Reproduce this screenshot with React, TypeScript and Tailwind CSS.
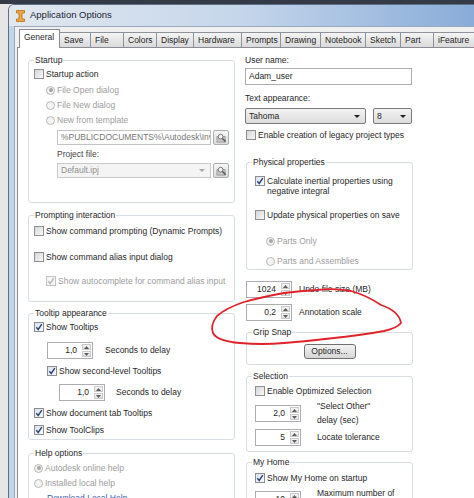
import type { ReactNode } from "react";

const dim = "text-[#9d9d9d]";

function Check({ checked = false, disabled = false }: { checked?: boolean; disabled?: boolean }) {
  const box = disabled
    ? "border-[#c4c4c4] bg-[#f5f5f5]"
    : checked
    ? "border-[#8b8d90] bg-linear-to-br from-[#d9e2ef] to-[#f9fbfd]"
    : "border-[#8e9093] bg-linear-to-br from-[#d6d6d6] to-[#f8f8f8]";
  return (
    <span className={"w-[10px] h-[10px] shrink-0 border flex items-center justify-center " + box}>
      {checked && (
        <svg viewBox="0 0 8 8" className="w-[8px] h-[8px]">
          <path
            d="M1.3 4.3 L3.2 6.5 L6.8 1.2"
            fill="none"
            stroke={disabled ? "#b9b9b9" : "#2f4477"}
            strokeWidth="1.4"
          />
        </svg>
      )}
    </span>
  );
}

function Radio({ selected = false }: { selected?: boolean }) {
  return (
    <span className="w-[9px] h-[9px] shrink-0 rounded-full border border-[#b8b8b8] bg-[#f3f3f3] flex items-center justify-center">
      {selected && <span className="w-[4px] h-[4px] rounded-full bg-[#a6a6a6]" />}
    </span>
  );
}

function Row({ className = "", children }: { className?: string; children: ReactNode }) {
  return <div className={"h-[12px] flex items-center gap-[2px] leading-[12px] whitespace-nowrap " + className}>{children}</div>;
}

function Group({ label, className = "", children }: { label: string; className?: string; children: ReactNode }) {
  return (
    <div className={"border border-[#d7dde2] rounded-[3px] " + className}>
      <div className="-mt-[6px] ml-[5px] px-[1px] w-fit h-[11px] leading-[11px] bg-white">{label}</div>
      {children}
    </div>
  );
}

function Arrow({ up = false }: { up?: boolean }) {
  return (
    <svg viewBox="0 0 5 3" className="w-[5px] h-[3px]">
      <path d={up ? "M0 3 L2.5 0 L5 3 Z" : "M0 0 L2.5 3 L5 0 Z"} fill="#5a5a5a" />
    </svg>
  );
}

function Spin({ value }: { value: string }) {
  return (
    <div className="w-[46px] h-[17px] shrink-0 border border-[#abadb3] bg-white flex">
      <div className="flex-1 flex items-center justify-end pr-[4px]">{value}</div>
      <div className="w-[11px] flex flex-col gap-px p-px">
        <div className="flex-1 border border-[#c9c9c9] bg-linear-to-b from-[#f5f5f5] to-[#e2e2e2] flex items-center justify-center">
          <Arrow up />
        </div>
        <div className="flex-1 border border-[#c9c9c9] bg-linear-to-b from-[#f5f5f5] to-[#e2e2e2] flex items-center justify-center">
          <Arrow />
        </div>
      </div>
    </div>
  );
}

function Browse() {
  return (
    <div className="w-[16px] h-[15px] shrink-0 border border-[#adadad] rounded-[2px] bg-linear-to-b from-[#f7f7f7] to-[#dcdcdc] flex items-center justify-center">
      <svg viewBox="0 0 12 11" className="w-[11px] h-[10px]">
        <rect x="1" y="4" width="9" height="6" fill="#c9c9c9" stroke="#8a8a8a" strokeWidth="0.8" />
        <circle cx="5" cy="4" r="2.6" fill="#eef2f6" stroke="#6d6d6d" strokeWidth="1" />
        <path d="M7 6 L10.5 9.5" stroke="#5c5c5c" strokeWidth="1.6" />
      </svg>
    </div>
  );
}

function Combo({ text, size, disabled = false }: { text: string; size: string; disabled?: boolean }) {
  const box = disabled
    ? "border-[#c9c9c9] bg-[#f4f4f4] text-[#8f8f8f]"
    : "border-[#7a7a7a] rounded-[2px] bg-linear-to-b from-[#f3f3f3] to-[#dcdcdc]";
  return (
    <div className={"border flex items-center pl-[3px] pr-[5px] " + size + " " + box}>
      <span className="flex-1">{text}</span>
      <svg viewBox="0 0 6 3" className="w-[6px] h-[3px]">
        <path d="M0 0 L3 3 L6 0 Z" fill={disabled ? "#a8a8a8" : "#1f1f1f"} />
      </svg>
    </div>
  );
}

const tabs: [string, string][] = [
  ["Save", "w-[31px]"],
  ["File", "w-[33px]"],
  ["Colors", "w-[33px]"],
  ["Display", "w-[37px]"],
  ["Hardware", "w-[48px]"],
  ["Prompts", "w-[39px]"],
  ["Drawing", "w-[40px]"],
  ["Notebook", "w-[45px]"],
  ["Sketch", "w-[35px]"],
  ["Part", "w-[33px]"],
  ["iFeature", "w-[50px]"],
];

export default function App() {
  return (
    <div className="w-[474px] h-[498px] overflow-hidden relative bg-[#e6e6e6] flex flex-col font-['Liberation_Sans',Arial,sans-serif] text-[8.5px] text-[#1f1f1f]">
      <div className="h-[4px] shrink-0 bg-[#343b47]" />

      <div className="flex-1 min-h-0 ml-[8px] flex flex-col rounded-tl-[6px] border-l border-t border-[#5f6f86] overflow-hidden">
        {/* title bar */}
        <div className="h-[21px] shrink-0 flex items-center bg-linear-to-r from-[#e2e8ef] via-[#c5d6ea] to-[#89acd8]">
          <svg viewBox="0 0 9 12" className="ml-[7px] w-[9px] h-[12px]">
            <path
              d="M0.5 0.5 H8.5 V3 H6 V9 H8.5 V11.5 H0.5 V9 H3 V3 H0.5 Z"
              fill="#f2a93b"
              stroke="#b86d16"
              strokeWidth="0.8"
            />
          </svg>
          <span className="ml-[5px] -mt-[1px] text-[9.5px] text-[#1b2433]">Application Options</span>
        </div>

        <div className="flex-1 min-h-0 flex">
          <div className="w-[5px] shrink-0 bg-[#c2d5ea]" />
          <div className="flex-1 min-w-0 flex flex-col border-l border-t border-[#98a8bd] bg-[#f0f0f0]">
            {/* tabs */}
            <div className="flex items-end pl-[4px] pt-[2px] whitespace-nowrap">
              <div className="relative z-10 -mb-px w-[41px] h-[19px] shrink-0 border-l border-t border-r border-[#898c95] bg-white pl-[4px] pt-[2px] leading-[10px]">
                General
              </div>
              {tabs.map(([t, w]) => (
                <div
                  key={t}
                  className={"h-[15px] shrink-0 border-t border-r border-[#8d929b] bg-linear-to-b from-[#f4f4f4] to-[#dadada] pl-[4px] flex items-center " + w}
                >
                  {t}
                </div>
              ))}
            </div>

            {/* panel */}
            <div className="flex-1 min-h-0 ml-[2px] border-l border-t border-[#898c95] bg-white flex items-start">
              {/* left column */}
              <div className="w-[207px] shrink-0 ml-[10px] pt-[12px] flex flex-col">
                <Group label="Startup" className="pb-[24px]">
                  <Row className="mt-[2px] pl-[5px]">
                    <Check />
                    <span>Startup action</span>
                  </Row>
                  <Row className={"mt-[4px] pl-[17px] " + dim}>
                    <Radio selected />
                    <span>File Open dialog</span>
                  </Row>
                  <Row className={"mt-[3px] pl-[17px] " + dim}>
                    <Radio />
                    <span>File New dialog</span>
                  </Row>
                  <Row className={"mt-[3px] pl-[17px] " + dim}>
                    <Radio />
                    <span>New from template</span>
                  </Row>
                  <div className="mt-[4px] ml-[28px] flex gap-[2px]">
                    <div className="w-[154px] h-[15px] border border-[#c4c4c4] bg-white pl-[3px] flex items-center overflow-hidden whitespace-nowrap text-[#777]">
                      %PUBLICDOCUMENTS%\Autodesk\Inventor 2012\Templates
                    </div>
                    <Browse />
                  </div>
                  <Row className="mt-[3px] pl-[28px] text-[#444]">
                    <span>Project file:</span>
                  </Row>
                  <div className="mt-[3px] ml-[28px] flex gap-[2px]">
                    <Combo text="Default.ipj" size="w-[154px] h-[15px]" disabled />
                    <Browse />
                  </div>
                </Group>

                <Group label="Prompting interaction" className="mt-[12px] pb-[14px]">
                  <Row className="mt-[4px] pl-[5px]">
                    <Check />
                    <span>Show command prompting (Dynamic Prompts)</span>
                  </Row>
                  <Row className="mt-[14px] pl-[5px]">
                    <Check />
                    <span>Show command alias input dialog</span>
                  </Row>
                  <Row className={"mt-[12px] pl-[17px] " + dim}>
                    <Check checked disabled />
                    <span>Show autocomplete for command alias input</span>
                  </Row>
                </Group>

                <Group label="Tooltip appearance" className="mt-[11px] pb-[3px]">
                  <Row className="mt-[2px] pl-[5px]">
                    <Check checked />
                    <span>Show Tooltips</span>
                  </Row>
                  <div className="mt-[9px] ml-[18px] flex items-center">
                    <Spin value="1,0" />
                    <span className="ml-[12px]">Seconds to delay</span>
                  </div>
                  <Row className="mt-[6px] pl-[18px]">
                    <Check checked />
                    <span>Show second-level Tooltips</span>
                  </Row>
                  <div className="mt-[7px] ml-[30px] flex items-center">
                    <Spin value="1,0" />
                    <span className="ml-[11px]">Seconds to delay</span>
                  </div>
                  <Row className="mt-[6px] pl-[5px]">
                    <Check checked />
                    <span>Show document tab Tooltips</span>
                  </Row>
                  <Row className="mt-[5px] pl-[5px]">
                    <Check checked />
                    <span>Show ToolClips</span>
                  </Row>
                </Group>

                <Group label="Help options" className="mt-[13px] pb-[20px]">
                  <Row className={"mt-[3px] pl-[5px] " + dim}>
                    <Radio selected />
                    <span>Autodesk online help</span>
                  </Row>
                  <Row className={"mt-[3px] pl-[5px] " + dim}>
                    <Radio />
                    <span>Installed local help</span>
                  </Row>
                  <Row className="mt-[3px] pl-[18px] text-[#3a5fae] underline">
                    <span>Download Local Help</span>
                  </Row>
                </Group>
              </div>

              {/* right column */}
              <div className="w-[168px] shrink-0 ml-[10px] flex flex-col">
                <Row className="mt-[6px]">
                  <span>User name:</span>
                </Row>
                <div className="mt-[2px] w-[167px] h-[17px] border border-[#abadb3] bg-white px-[3px] flex items-center">
                  Adam_user
                </div>
                <Row className="mt-[7px]">
                  <span>Text appearance:</span>
                </Row>
                <div className="mt-[4px] flex gap-[7px]">
                  <Combo text="Tahoma" size="w-[121px] h-[16px]" />
                  <Combo text="8" size="w-[39px] h-[16px]" />
                </div>
                <Row className="mt-[5px] pl-[1px]">
                  <Check />
                  <span>Enable creation of legacy project types</span>
                </Row>

                <Group label="Physical properties" className="mt-[21px] ml-[1px] w-[167px] pb-[2px]">
                  <div className="mt-[8px] pl-[8px] flex items-start gap-[2px]">
                    <Check checked />
                    <div className="leading-[10px]">
                      Calculate inertial properties using
                      <br />
                      negative integral
                    </div>
                  </div>
                  <Row className="mt-[13px] pl-[8px]">
                    <Check />
                    <span>Update physical properties on save</span>
                  </Row>
                  <Row className={"mt-[14px] pl-[19px] " + dim}>
                    <Radio selected />
                    <span>Parts Only</span>
                  </Row>
                  <Row className={"mt-[8px] pl-[19px] " + dim}>
                    <Radio />
                    <span>Parts and Assemblies</span>
                  </Row>
                </Group>

                <div className="mt-[11px] ml-[1px] flex items-center">
                  <Spin value="1024" />
                  <span className="ml-[7px]">Undo file size (MB)</span>
                </div>
                <div className="mt-[6px] ml-[1px] flex items-center">
                  <Spin value="0,2" />
                  <span className="ml-[7px]">Annotation scale</span>
                </div>

                <Group label="Grip Snap" className="mt-[11px] ml-[1px] w-[167px] pb-[5px]">
                  <div className="mt-[6px] flex justify-center">
                    <button className="w-[52px] h-[15px] border border-[#707070] rounded-[3px] bg-linear-to-b from-[#f3f3f3] to-[#d6d6d6] flex items-center justify-center">
                      Options...
                    </button>
                  </div>
                </Group>

                <Group label="Selection" className="mt-[11px] ml-[1px] w-[167px] pb-[5px]">
                  <Row className="mt-[3px] pl-[8px]">
                    <Check />
                    <span>Enable Optimized Selection</span>
                  </Row>
                  <div className="mt-[8px] pl-[8px] flex items-start">
                    <Spin value="2,0" />
                    <div className="ml-[16px] -mt-[6px] leading-[14px]">
                      "Select Other"
                      <br />
                      delay (sec)
                    </div>
                  </div>
                  <div className="mt-[2px] pl-[8px] flex items-center">
                    <Spin value="5" />
                    <span className="ml-[16px]">Locate tolerance</span>
                  </div>
                </Group>

                <Group label="My Home" className="mt-[10px] ml-[1px] w-[167px] pb-[10px]">
                  <Row className="mt-[4px] pl-[8px]">
                    <Check checked />
                    <span>Show My Home on startup</span>
                  </Row>
                  <div className="mt-[7px] pl-[8px] flex items-start">
                    <Spin value="10" />
                    <div className="ml-[16px] -mt-[5px] leading-[14px]">
                      Maximum number of
                      <br />
                      recent documents
                    </div>
                  </div>
                </Group>
              </div>
            </div>
          </div>
        </div>
      </div>

      {/* hand-drawn red annotation */}
      <svg className="absolute inset-0 pointer-events-none" width="474" height="498" viewBox="0 0 474 498">
        <path
          d="M401 323 Q399 311 381 305 Q366 295 351 291 Q334 288 317 290 Q300 291 284 293 Q262 297 244 302 Q226 308 217 316 Q210 325 213 333 Q217 341 240 343 Q262 345 284 343 Q310 341 334 338 Q362 335 384 331 Q397 328 401 323"
          fill="none"
          stroke="#e0232a"
          strokeWidth="1.8"
          strokeLinecap="round"
        />
      </svg>
    </div>
  );
}
